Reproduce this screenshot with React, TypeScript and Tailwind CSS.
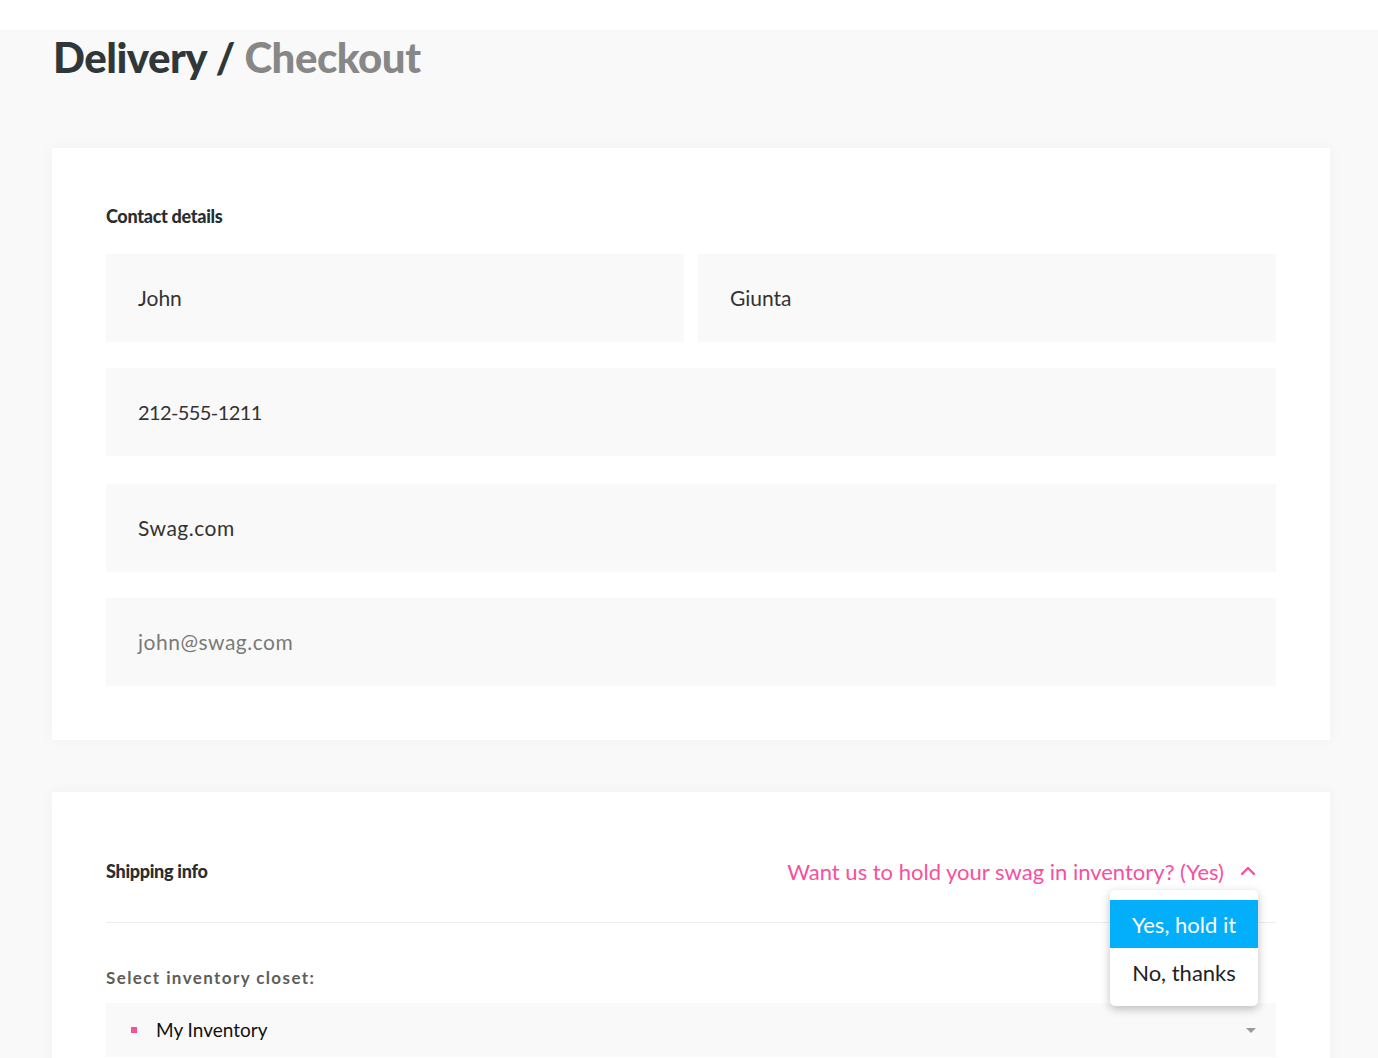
import React from "react";

const font = { fontFamily: "Lato, 'Open Sans', sans-serif" };

function Field({ value, placeholder, className = "", textClass = "text-[21px]" }: { value?: string; placeholder?: string; className?: string; textClass?: string }) {
  return (
    <div className={`h-[88px] bg-[#f9f9f9] flex items-center pl-[32px] ${className}`}>
      {value ? (
        <span className={`text-[#333] ${textClass}`}>{value}</span>
      ) : (
        <span className={`text-[#7a7a7a] ${textClass}`}>{placeholder}</span>
      )}
    </div>
  );
}

export default function App() {
  return (
    <div style={font} className="min-h-[1058px] w-full bg-white">
      <div className="h-[30px] bg-white" />
      <div className="bg-[#f9f9f9] pl-[52px] pr-[48px] pb-[40px] h-[1028px] overflow-hidden">
        <h1 className="pl-[1px] pt-[2px] text-[42px] leading-[50px] font-black tracking-[-0.5px] text-[#2f3739]">
          Delivery / <span className="text-[#878787]">Checkout</span>
        </h1>

        <div className="mt-[66px] bg-white shadow-[0_0_14px_rgba(0,0,0,0.04)] px-[54px] pt-[56px] pb-[54px]">
          <div className="text-[18px] font-black text-[#2a2e31] tracking-[-0.3px] leading-[24px]">Contact details</div>
          <div className="mt-[26px] flex gap-[14px]">
            <Field value="John" className="flex-1" />
            <Field value="Giunta" className="flex-1" />
          </div>
          <Field value="212-555-1211" className="mt-[26px]" textClass="text-[20px] tracking-[-0.6px]" />
          <Field value="Swag.com" className="mt-[28px]" textClass="text-[21px] tracking-[0.5px]" />
          <Field placeholder="john@swag.com" className="mt-[26px]" textClass="text-[21px] tracking-[0.5px]" />
        </div>

        <div className="mt-[52px] bg-white shadow-[0_0_14px_rgba(0,0,0,0.04)] px-[54px] pt-[54px] pb-[40px]">
          <div className="relative">
            <div className="flex items-center justify-between h-[50px]">
              <div className="text-[18px] font-black text-[#2a2e31] tracking-[-0.3px]">Shipping info</div>
              <div className="flex items-center gap-[16px] pr-[20px] text-[22px] text-[#f7509c]">
                <span>Want us to hold your swag in inventory? (Yes)</span>
                <svg width="16" height="10" viewBox="0 0 16 10" fill="none">
                  <path d="M2 8L8 2L14 8" stroke="#f7509c" strokeWidth="2.4" strokeLinecap="round" strokeLinejoin="round" />
                </svg>
              </div>
            </div>
            <div className="mt-[26px] border-t border-[#eeeeee]" />
            <div className="pt-[44px] text-[17px] font-bold tracking-[1.4px] text-[#5d5d5d] leading-[22px]">
              Select inventory closet:
            </div>
            <div className="mt-[14px] h-[54px] bg-[#f9f9f9] flex items-center pl-[25px] pr-[20px]">
              <span className="w-[6px] h-[6px] bg-[#f7509c]" />
              <span className="ml-[19px] text-[19px] text-[#111]">My Inventory</span>
              <span className="ml-auto w-0 h-0 border-l-[5px] border-r-[5px] border-t-[5px] border-l-transparent border-r-transparent border-t-[#9a9a9a]" />
            </div>

            <div className="absolute right-[18px] top-[44px] w-[148px] bg-white rounded-[5px] shadow-[0_3px_10px_rgba(0,0,0,0.25)] py-[10px]">
              <div className="h-[48px] bg-[#03aefb] text-white text-[22px] flex items-center justify-center">Yes, hold it</div>
              <div className="h-[48px] text-[#222] text-[22px] flex items-center justify-center">No, thanks</div>
            </div>
          </div>
        </div>
      </div>
    </div>
  );
}
